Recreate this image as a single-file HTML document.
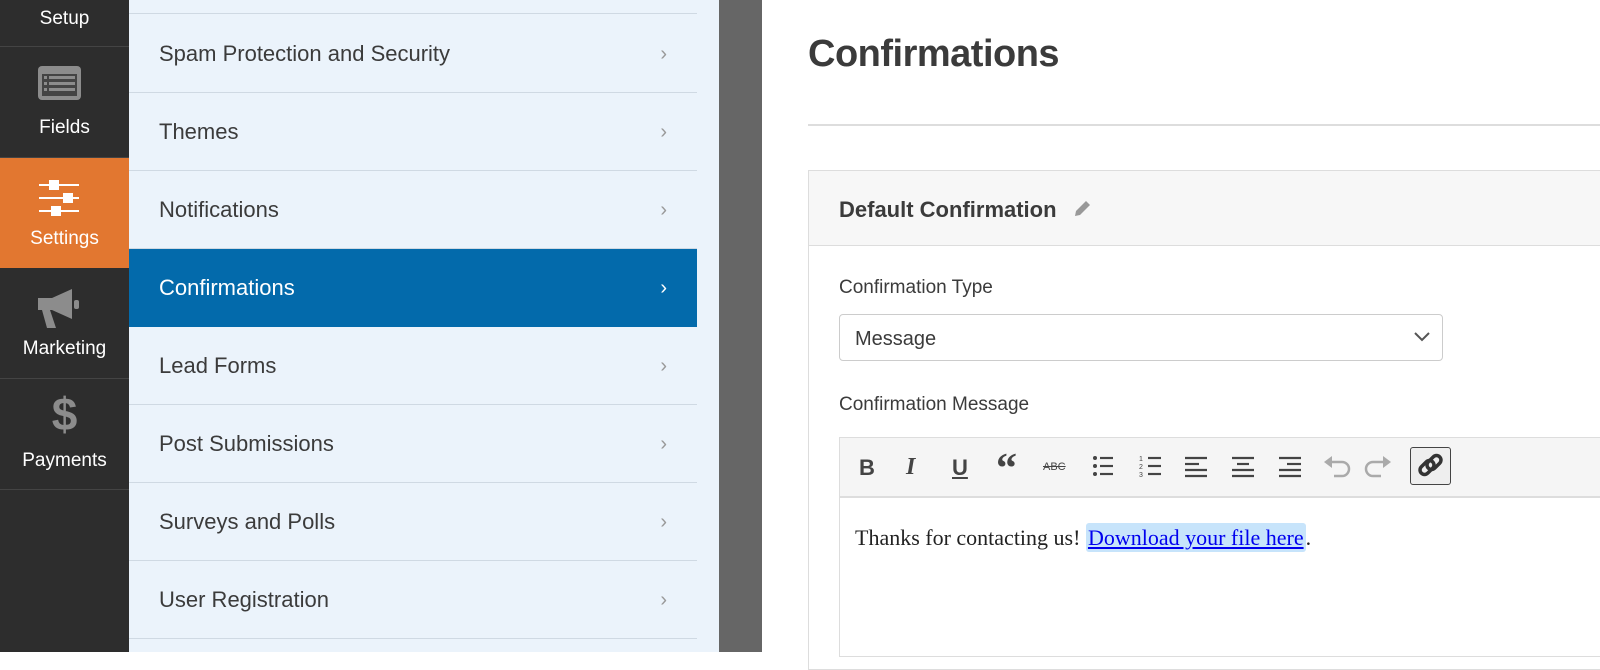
<!DOCTYPE html>
<html><head><meta charset="utf-8"><style>
*{margin:0;padding:0;box-sizing:border-box}
body{width:1600px;height:652px;overflow:hidden;position:relative;background:#fff;font-family:"Liberation Sans",sans-serif}
.side{position:absolute;left:0;top:0;width:129px;height:652px;background:#2d2d2d}
.si{position:absolute;left:0;width:129px;color:#fff;text-align:center;font-size:19px;border-bottom:1px solid #444}
.menu{position:absolute;left:129px;top:0;width:590px;height:652px;background:#ebf3fb}
.row{position:absolute;left:0;width:568px;height:78px;border-bottom:1px solid #cfd9e3;font-size:22px;color:#3b3b3b;padding-left:30px;line-height:78px}
.row .ch{position:absolute;right:30px;top:0;color:#999;font-size:20px}
.row.act{background:#036aab;color:#fff;border-bottom-color:#036aab}
.row.act .ch{color:#fff}
.gut{position:absolute;left:719px;top:0;width:43px;height:652px;background:#666}
.t{position:absolute;font-weight:bold;color:#444}
</style></head><body>
<div class="side">
 <div class="si" style="top:0;height:47px;line-height:38px">Setup</div>
 <div class="si" style="top:47px;height:111px">
  <svg style="position:absolute;left:37px;top:18px" width="45" height="36" viewBox="0 0 45 36"><rect x="1" y="1" width="43" height="34" rx="4" fill="#8c8c8c"/><rect x="5" y="9" width="35" height="22" fill="#444"/><g fill="#8c8c8c"><rect x="7" y="11" width="3" height="3"/><rect x="7" y="17" width="3" height="3"/><rect x="7" y="23" width="3" height="3"/><rect x="12" y="11" width="26" height="3"/><rect x="12" y="17" width="26" height="3"/><rect x="12" y="23" width="26" height="3"/></g></svg>
  <div style="position:absolute;top:70px;width:100%">Fields</div></div>
 <div class="si" style="top:158px;height:110px;background:#e27730;border:none">
  <svg style="position:absolute;left:39px;top:22px" width="42" height="36" viewBox="0 0 42 36" fill="#fff"><rect x="0" y="4" width="40" height="2"/><rect x="0" y="17" width="40" height="2"/><rect x="0" y="30" width="40" height="2"/><rect x="10" y="0" width="10" height="10"/><rect x="24" y="13" width="10" height="10"/><rect x="12" y="26" width="10" height="10"/></svg>
  <div style="position:absolute;top:70px;width:100%">Settings</div></div>
 <div class="si" style="top:268px;height:111px">
  <svg style="position:absolute;left:36px;top:20px" width="46" height="42" viewBox="0 0 46 42" fill="#8c8c8c"><path d="M2 10h14l20-9v30l-20-9H14l6 18h-9L6 22H2z"/><rect x="38" y="12" width="5" height="9" rx="2"/></svg>
  <div style="position:absolute;top:70px;width:100%">Marketing</div></div>
 <div class="si" style="top:379px;height:111px">
  <div style="position:absolute;top:8px;width:100%;font-size:46px;color:#8c8c8c;font-weight:bold">$</div>
  <div style="position:absolute;top:71px;width:100%">Payments</div></div>
</div>
<div class="menu">
 <div class="row" style="top:-64px"></div>
 <div class="row" style="top:15px">Spam Protection and Security<span class="ch">›</span></div>
 <div class="row" style="top:93px">Themes<span class="ch">›</span></div>
 <div class="row" style="top:171px">Notifications<span class="ch">›</span></div>
 <div class="row act" style="top:249px">Confirmations<span class="ch">›</span></div>
 <div class="row" style="top:327px">Lead Forms<span class="ch">›</span></div>
 <div class="row" style="top:405px">Post Submissions<span class="ch">›</span></div>
 <div class="row" style="top:483px">Surveys and Polls<span class="ch">›</span></div>
 <div class="row" style="top:561px">User Registration<span class="ch">›</span></div>
</div>
<div class="gut"></div>
<div style="position:absolute;left:808px;top:33px;font-size:38px;color:#3b3b3b;font-weight:bold;letter-spacing:-0.5px">Confirmations</div>
<div style="position:absolute;left:808px;top:124px;width:792px;height:2px;background:#ddd"></div>
<div style="position:absolute;left:808px;top:170px;width:800px;height:500px;border:1px solid #ddd;background:#fff">
 <div style="height:75px;background:#f7f7f7;border-bottom:1px solid #ddd;padding:26px 0 0 30px;font-size:22px;color:#3b3b3b;font-weight:bold">Default Confirmation <svg width="22" height="22" viewBox="0 0 22 22" style="vertical-align:-3px;margin-left:8px"><path d="M4 18l1-5L15 3l4 4L9 17z" fill="#999"/></svg></div>
</div>
<div style="position:absolute;left:839px;top:277px;font-size:19px;color:#3b3b3b">Confirmation Type</div>
<div style="position:absolute;left:839px;top:314px;width:604px;height:47px;border:1px solid #ccc;border-radius:4px;font-size:20px;color:#3b3b3b;padding:13px 0 0 15px">Message
 <svg style="position:absolute;right:12px;top:17px" width="16" height="10" viewBox="0 0 16 10"><path d="M1 1l7 7 7-7" stroke="#555" stroke-width="2" fill="none"/></svg></div>
<div style="position:absolute;left:839px;top:394px;font-size:19px;color:#3b3b3b">Confirmation Message</div>
<div style="position:absolute;left:839px;top:437px;width:770px;height:220px;border:1px solid #ddd;background:#fff">
 <div style="height:60px;background:#f5f5f5;border-bottom:2px solid #ddd"></div>
</div>
<div class="t" style="left:859px;top:455px;font-size:22px">B</div>
<div class="t" style="left:906px;top:454px;font-size:24px;font-family:'Liberation Serif',serif;font-style:italic">I</div>
<div class="t" style="left:952px;top:455px;font-size:22px;text-decoration:underline">U</div>
<div class="t" style="left:996px;top:448px;font-size:42px;font-family:'Liberation Serif',serif;line-height:1">“</div>
<div style="position:absolute;left:1043px;top:461px;font-size:11px;color:#444;text-decoration:line-through">ABC</div>
<svg style="position:absolute;left:1090px;top:455px" width="310" height="26" viewBox="0 0 310 26" fill="none" stroke="#444" stroke-width="2.2">
 <g><line x1="10" y1="3" x2="23" y2="3"/><line x1="10" y1="11" x2="23" y2="11"/><line x1="10" y1="19" x2="23" y2="19"/><circle cx="5" cy="3" r="2" fill="#444" stroke="none"/><circle cx="5" cy="11" r="2" fill="#444" stroke="none"/><circle cx="5" cy="19" r="2" fill="#444" stroke="none"/></g>
 <g transform="translate(48,0)"><line x1="10" y1="3" x2="23" y2="3"/><line x1="10" y1="11" x2="23" y2="11"/><line x1="10" y1="19" x2="23" y2="19"/><text x="1" y="6" font-size="7" fill="#444" stroke="none" font-family="Liberation Sans">1</text><text x="1" y="14" font-size="7" fill="#444" stroke="none" font-family="Liberation Sans">2</text><text x="1" y="22" font-size="7" fill="#444" stroke="none" font-family="Liberation Sans">3</text></g>
 <g transform="translate(95,1)"><line x1="0" y1="2" x2="22" y2="2"/><line x1="0" y1="8" x2="14" y2="8"/><line x1="0" y1="14" x2="22" y2="14"/><line x1="0" y1="20" x2="22" y2="20"/></g>
 <g transform="translate(142,1)"><line x1="0" y1="2" x2="22" y2="2"/><line x1="5" y1="8" x2="17" y2="8"/><line x1="0" y1="14" x2="22" y2="14"/><line x1="0" y1="20" x2="22" y2="20"/></g>
 <g transform="translate(189,1)"><line x1="0" y1="2" x2="22" y2="2"/><line x1="8" y1="8" x2="22" y2="8"/><line x1="0" y1="14" x2="22" y2="14"/><line x1="0" y1="20" x2="22" y2="20"/></g>
 <g stroke="#aaa" stroke-width="2.5"><path d="M240 7h12a7 7 0 0 1 0 14h-8"/><path d="M295 7h-12a7 7 0 0 0 0 14h8"/></g>
 <g fill="#aaa" stroke="none"><path d="M234 7l8-6v12z"/><path d="M301 7l-8-6v12z"/></g>
</svg>
<div style="position:absolute;left:1410px;top:447px;width:41px;height:38px;border:1px solid #444;border-radius:3px;background:#eee">
 <svg width="39" height="36" viewBox="0 0 39 36" fill="none" stroke="#333" stroke-width="3.5"><rect x="8" y="15" width="16" height="9" rx="4.5" transform="rotate(-45 16 19.5)"/><rect x="15" y="10" width="16" height="9" rx="4.5" transform="rotate(-45 23 14.5)"/></svg>
</div>
<div style="position:absolute;left:855px;top:525px;font-family:'Liberation Serif',serif;font-size:22px;color:#222">Thanks for contacting us! <span style="background:#c7e4fb;color:#00e;text-decoration:underline;border-radius:3px;padding:2px 2px">Download your file here</span>.</div>
</body></html>
